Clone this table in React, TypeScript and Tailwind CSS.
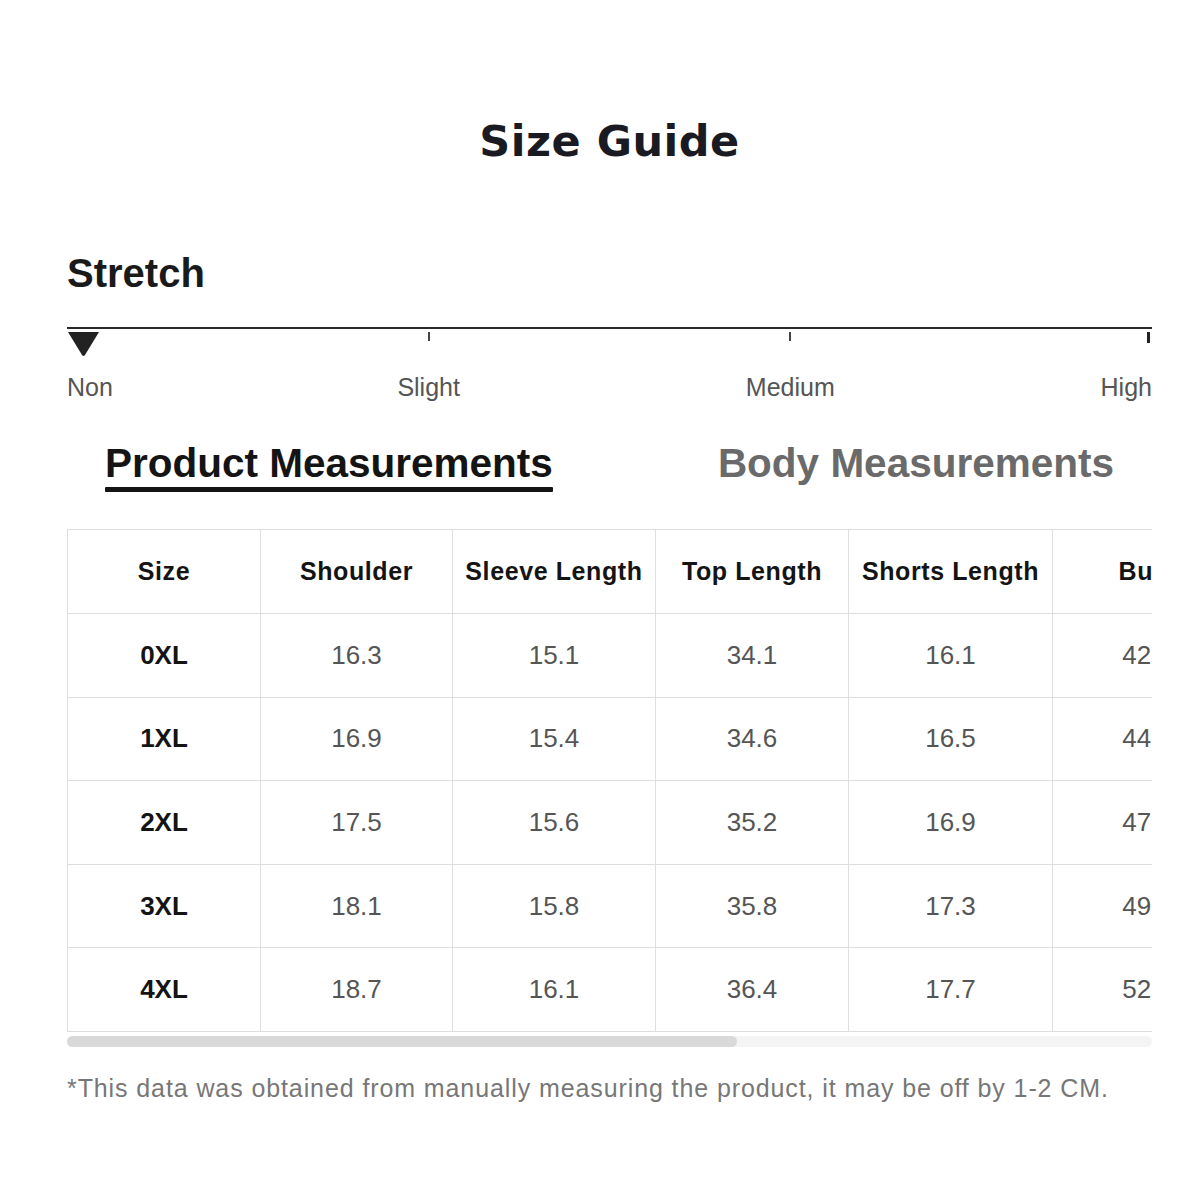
const columns = [
  { label: "Size", w: "w-[193px]" },
  { label: "Shoulder", w: "w-[192px]" },
  { label: "Sleeve Length", w: "w-[203px]" },
  { label: "Top Length", w: "w-[193px]" },
  { label: "Shorts Length", w: "w-[204px]" },
  { label: "Bust", w: "w-[190px]" },
  { label: "Waist", w: "w-[190px]" },
];

const rows = [
  ["0XL", "16.3", "15.1", "34.1", "16.1", "42.1", "33.9"],
  ["1XL", "16.9", "15.4", "34.6", "16.5", "44.5", "36.2"],
  ["2XL", "17.5", "15.6", "35.2", "16.9", "47.2", "38.6"],
  ["3XL", "18.1", "15.8", "35.8", "17.3", "49.6", "40.9"],
  ["4XL", "18.7", "16.1", "36.4", "17.7", "52.0", "43.3"],
];

const stretchLevels = ["Non", "Slight", "Medium", "High"];

export default function App() {
  return (
    <div className="w-[1200px] h-[1200px] bg-white font-['Liberation_Sans',Arial,sans-serif]">
      <div className="pl-[67px] pr-[48px]">
        {/* Title */}
        <h1 className="pt-[112px] text-center text-[43px] leading-[58px] font-bold text-[#1a1a22] font-['DejaVu_Sans',sans-serif] tracking-[0.5px]">
          Size Guide
        </h1>

        {/* Stretch */}
        <h2 className="mt-[80px] text-[40px] leading-[46px] font-bold text-[#1a1a1a]">
          Stretch
        </h2>
        <div className="mt-[31px] w-[1085px]">
          <div className="h-[2px] bg-[#2a2a2a]" />
          <div className="relative flex justify-between h-[28px]">
            <div className="w-0">
              <svg width="33" height="26" viewBox="0 0 33 26" className="mt-[2px]">
                <path d="M1 1 H32 L18 24 Q16.5 26 15 24 Z" fill="#222" />
              </svg>
            </div>
            <div className="w-0 flex justify-center">
              <div className="w-[2px] h-[9px] mt-[3px] bg-[#444] shrink-0" />
            </div>
            <div className="w-0 flex justify-center">
              <div className="w-[2px] h-[9px] mt-[3px] bg-[#444] shrink-0" />
            </div>
            <div className="w-0 flex justify-end">
              <div className="w-[3px] h-[11px] mt-[3px] mr-[2px] bg-[#222] shrink-0" />
            </div>
          </div>
          <div className="flex justify-between mt-[15px]">
            {stretchLevels.map((l, i) => (
              <div
                key={l}
                className={
                  i === 0
                    ? "w-0 flex justify-start"
                    : i === 3
                    ? "w-0 flex justify-end"
                    : "w-0 flex justify-center"
                }
              >
                <span className="whitespace-nowrap text-[25px] leading-[30px] text-[#555]">
                  {l}
                </span>
              </div>
            ))}
          </div>
        </div>

        {/* Tabs */}
        <div className="mt-[37px] flex ml-[38px] gap-[165px]">
          <div className="flex flex-col">
            <span className="text-[40.5px] leading-[48px] font-bold text-[#141414]">
              Product Measurements
            </span>
            <div className="h-[5px] bg-[#151515] rounded-[1px]" />
          </div>
          <span className="text-[40.5px] leading-[48px] font-bold text-[#6a6a6a]">
            Body Measurements
          </span>
        </div>

        {/* Table */}
        <div className="mt-[37px] w-[1085px] overflow-hidden">
          <div className="flex flex-col w-max border-t border-l border-[#dedede]">
            <div className="flex h-[84px]">
              {columns.map((c) => (
                <div
                  key={c.label}
                  className={`${c.w} shrink-0 flex items-center justify-center border-r border-b border-[#dedede] text-[25px] font-bold text-[#141414] tracking-[0.6px]`}
                >
                  {c.label}
                </div>
              ))}
            </div>
            {rows.map((r) => (
              <div key={r[0]} className="flex h-[83.6px]">
                {r.map((v, i) => (
                  <div
                    key={i}
                    className={`${columns[i].w} shrink-0 flex items-center justify-center border-r border-b border-[#dedede] text-[26px] ${
                      i === 0 ? "font-bold text-[#141414]" : "text-[#555]"
                    }`}
                  >
                    {v}
                  </div>
                ))}
              </div>
            ))}
          </div>
          {/* Scrollbar */}
          <div className="mt-[4px] h-[11px] bg-[#f4f4f4] rounded-full">
            <div className="h-[11px] w-[670px] bg-[#d9d9d9] rounded-full" />
          </div>
        </div>

        {/* Note */}
        <p className="mt-[26px] text-[25px] leading-[30px] text-[#777] tracking-[0.9px] whitespace-nowrap">
          *This data was obtained from manually measuring the product, it may be off by 1-2 CM.
        </p>
      </div>
    </div>
  );
}
